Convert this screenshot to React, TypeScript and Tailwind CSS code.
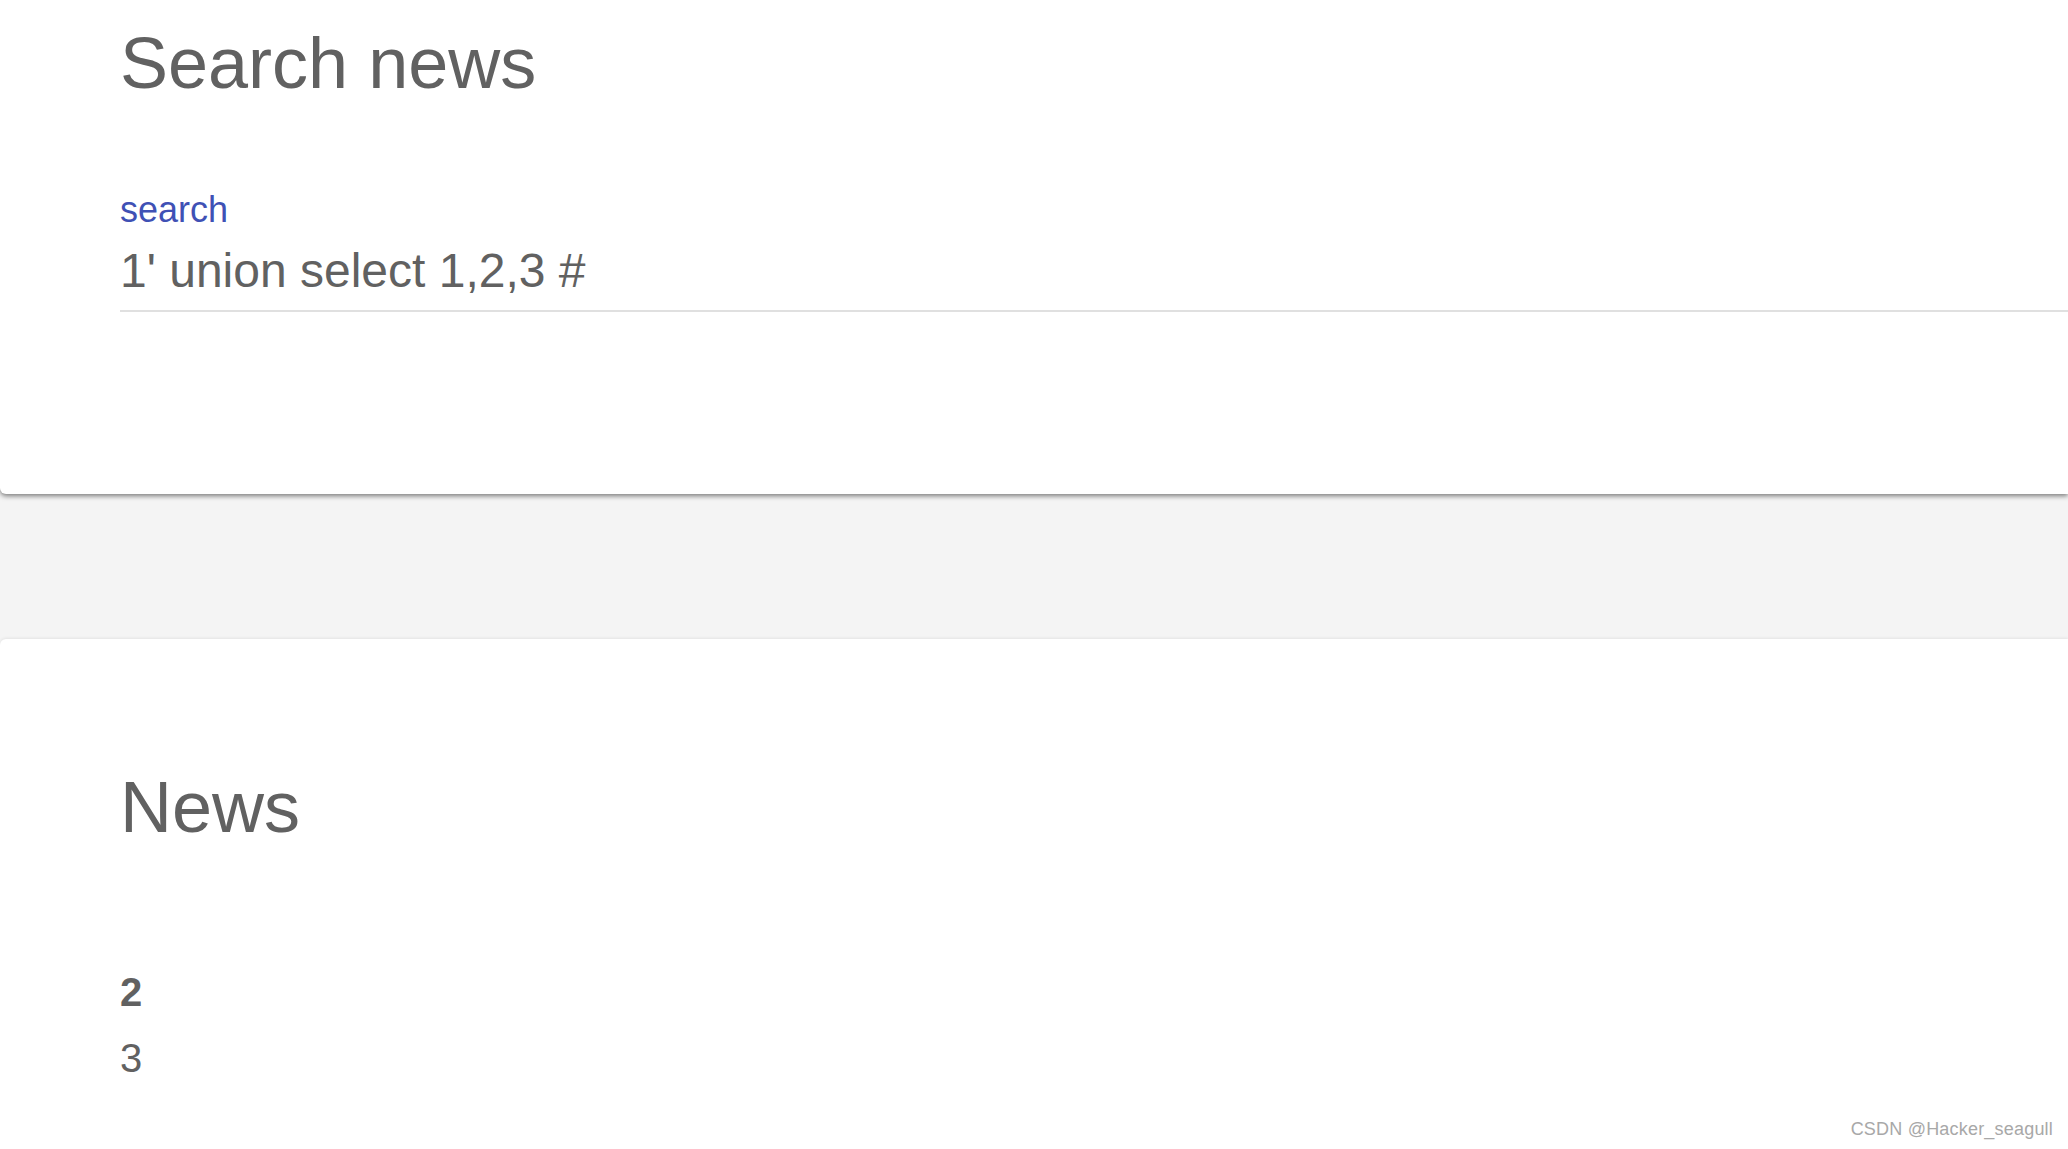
import React from "react";

export default function App() {
  return (
    <div
      className="relative min-h-[1149px] w-full overflow-hidden bg-[#f4f4f4] text-[#616161]"
      style={{ fontFamily: '"Liberation Sans", Arial, sans-serif' }}
    >
      <div className="relative z-10 h-[494px] rounded-bl-[6px] bg-white pl-[120px] shadow-[0_2px_5px_rgba(0,0,0,0.5)]">
        <h1 className="pt-[27px] text-[72px] font-normal leading-[72px]">Search news</h1>
        <div className="mt-[93px] text-[36px] leading-[36px] text-[#3f51b5]">search</div>
        <div className="mt-[19px] border-b-2 border-[#e0e0e0] pb-[15px] text-[48px] leading-[48px]">
          1' union select 1,2,3 #
        </div>
      </div>
      <div className="h-[145px]" />
      <div className="min-h-[510px] rounded-tl-[6px] bg-white pl-[120px] shadow-[0_-1px_3px_rgba(0,0,0,0.07)]">
        <h2 className="pt-[132px] text-[72px] font-normal leading-[72px]">News</h2>
        <div className="mt-[129px] text-[40px] font-bold leading-[40px]">2</div>
        <div className="mt-[26px] text-[40px] leading-[40px]">3</div>
      </div>
      <div className="absolute bottom-[11px] right-[15px] text-[18px] leading-[18px] tracking-[0.2px] text-[#a8a8a8]">
        CSDN @Hacker_seagull
      </div>
    </div>
  );
}
